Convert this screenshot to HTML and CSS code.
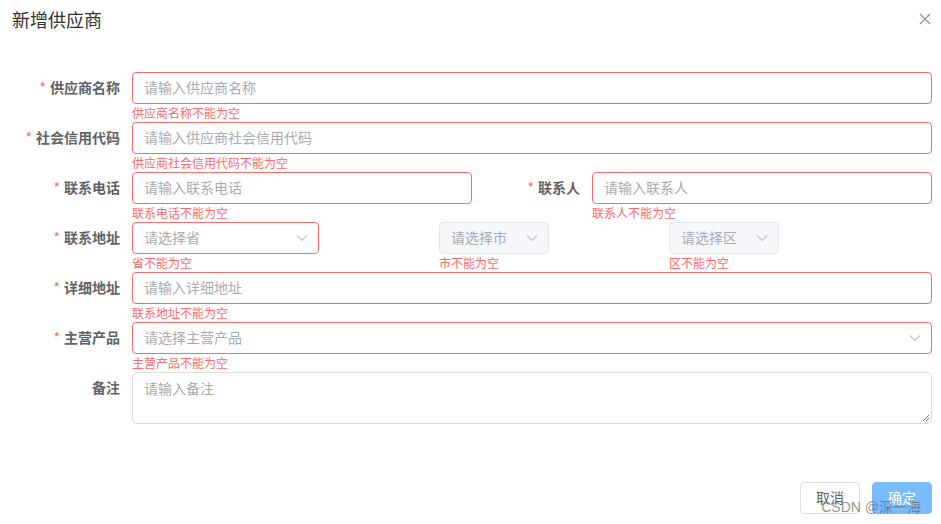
FILE: index.html
```html
<!DOCTYPE html>
<html lang="zh">
<head>
<meta charset="utf-8">
<title>新增供应商</title>
<link rel="stylesheet" href="styles.css">
</head>
<body>
<div class="dialog">
  <div class="header">
    <span class="title">新增供应商</span>
    <svg class="close" width="12" height="12" viewBox="0 0 12 12"><path d="M1 1L11 11M11 1L1 11" stroke="#909399" stroke-width="1.3" fill="none"/></svg>
  </div>
  <form class="form">
    <div class="item">
      <label class="label"><span class="req">*</span>供应商名称</label>
      <div class="content">
        <div class="input err"><span class="ph">请输入供应商名称</span></div>
        <div class="msg">供应商名称不能为空</div>
      </div>
    </div>
    <div class="item">
      <label class="label"><span class="req">*</span>社会信用代码</label>
      <div class="content">
        <div class="input err"><span class="ph">请输入供应商社会信用代码</span></div>
        <div class="msg">供应商社会信用代码不能为空</div>
      </div>
    </div>
    <div class="row2">
      <div class="item">
        <label class="label"><span class="req">*</span>联系电话</label>
        <div class="content">
          <div class="input err"><span class="ph">请输入联系电话</span></div>
          <div class="msg">联系电话不能为空</div>
        </div>
      </div>
      <div class="item">
        <label class="label narrow"><span class="req">*</span>联系人</label>
        <div class="content">
          <div class="input err"><span class="ph">请输入联系人</span></div>
          <div class="msg">联系人不能为空</div>
        </div>
      </div>
    </div>
    <div class="item">
      <label class="label"><span class="req">*</span>联系地址</label>
      <div class="content addr">
        <div class="cell">
          <div class="input err select prov"><span class="ph">请选择省</span><svg class="arrow" width="12" height="8" viewBox="0 0 12 8"><path d="M1 1.5L6 6.5L11 1.5" stroke="#c0c4cc" stroke-width="1.2" fill="none"/></svg></div>
          <div class="msg">省不能为空</div>
        </div>
        <div class="cell">
          <div class="input disabled select small"><span class="ph">请选择市</span><svg class="arrow" width="12" height="8" viewBox="0 0 12 8"><path d="M1 1.5L6 6.5L11 1.5" stroke="#c0c4cc" stroke-width="1.2" fill="none"/></svg></div>
          <div class="msg">市不能为空</div>
        </div>
        <div class="cell">
          <div class="input disabled select small"><span class="ph">请选择区</span><svg class="arrow" width="12" height="8" viewBox="0 0 12 8"><path d="M1 1.5L6 6.5L11 1.5" stroke="#c0c4cc" stroke-width="1.2" fill="none"/></svg></div>
          <div class="msg">区不能为空</div>
        </div>
      </div>
    </div>
    <div class="item">
      <label class="label"><span class="req">*</span>详细地址</label>
      <div class="content">
        <div class="input err"><span class="ph">请输入详细地址</span></div>
        <div class="msg">联系地址不能为空</div>
      </div>
    </div>
    <div class="item">
      <label class="label"><span class="req">*</span>主营产品</label>
      <div class="content">
        <div class="input err select"><span class="ph">请选择主营产品</span><svg class="arrow" width="12" height="8" viewBox="0 0 12 8"><path d="M1 1.5L6 6.5L11 1.5" stroke="#c0c4cc" stroke-width="1.2" fill="none"/></svg></div>
        <div class="msg">主营产品不能为空</div>
      </div>
    </div>
    <div class="item last">
      <label class="label">备注</label>
      <div class="content">
        <div class="textarea"><span class="ph">请输入备注</span>
          <svg class="grip" width="8" height="8" viewBox="0 0 8 8"><path d="M7 1L1 7M7 4L4 7M7 6.5L6.5 7" stroke="#606266" stroke-width="0.9" fill="none"/></svg>
        </div>
      </div>
    </div>
  </form>
  <div class="footer">
    <button type="button" class="btn">取消</button>
    <button type="button" class="btn primary">确定</button>
  </div>
  <div class="watermark">CSDN @深一海</div>
</div>
</body>
</html>
```
FILE: styles.css
```css
* { box-sizing: border-box; }
body {
  margin: 0;
  background: #fff;
  font-family: "Noto Sans CJK SC", "Noto Sans", "Liberation Sans", sans-serif;
  color: #606266;
  width: 941px;
  height: 524px;
  overflow: hidden;
}
.dialog {
  position: relative;
  width: 941px;
  height: 524px;
}
.header {
  display: flex;
  justify-content: space-between;
  align-items: center;
  height: 40px;
  padding: 0 10px 2px 12px;
}
.title {
  font-size: 18px;
  color: #303133;
  line-height: 24px;
}
.close { display: block; }
.form {
  margin: 32px 9px 0 0;
}
.item {
  display: flex;
  align-items: flex-start;
}
.label {
  flex: 0 0 132px;
  width: 132px;
  padding-right: 12px;
  text-align: right;
  font-size: 14px;
  font-weight: bold;
  line-height: 30px;
  color: #606266;
}
.label.narrow { flex-basis: 120px; width: 120px; }
.req {
  color: #f56c6c;
  margin-right: 4px;
  font-weight: normal;
}
.content {
  flex: 1;
  min-width: 0;
}
.input {
  position: relative;
  height: 32px;
  border: 1px solid #dcdfe6;
  border-radius: 4px;
  padding: 0 11px 2px;
  display: flex;
  align-items: center;
  font-size: 14px;
  background: #fff;
}
.input.err { border-color: #f56c6c; }
.input.disabled {
  background: #f5f7fa;
  border-color: #e4e7ed;
}
.ph {
  color: #a8abb2;
  font-size: 14px;
  line-height: 20px;
  white-space: nowrap;
}
.select { justify-content: space-between; padding-right: 10px; padding-bottom: 0; }
.select .ph { margin-bottom: 2px; }
.arrow { display: block; flex: none; }
.msg {
  color: #f56c6c;
  font-size: 12px;
  line-height: 17px;
  height: 18px;
  white-space: nowrap;
}
.row2 {
  display: grid;
  grid-template-columns: 472px 1fr;
}
.addr {
  display: grid;
  grid-template-columns: 307px 230px 1fr;
}
.prov { width: 187px; }
.small { width: 110px; }
.textarea {
  position: relative;
  height: 52px;
  border: 1px solid #dcdfe6;
  border-radius: 4px;
  padding: 4px 11px;
  line-height: 21px;
}
.grip {
  position: absolute;
  right: 1px;
  bottom: 1px;
}
.last { margin-bottom: 18px; }
.footer {
  display: flex;
  justify-content: flex-end;
  gap: 12px;
  padding: 40px 9px 0 0;
}
.btn {
  height: 32px;
  width: 60px;
  border: 1px solid #dcdfe6;
  border-radius: 4px;
  background: #fff;
  color: #606266;
  font-family: inherit;
  font-size: 14px;
  padding: 0 0 2px;
}
.btn.primary {
  background: #79bbff;
  border-color: #79bbff;
  color: #fff;
}
.watermark {
  position: absolute;
  right: 20px;
  bottom: 8px;
  font-size: 14px;
  line-height: 18px;
  color: rgba(110, 110, 110, 0.75);
  font-family: "Liberation Sans", "Noto Sans CJK SC", sans-serif;
  white-space: nowrap;
}
```
